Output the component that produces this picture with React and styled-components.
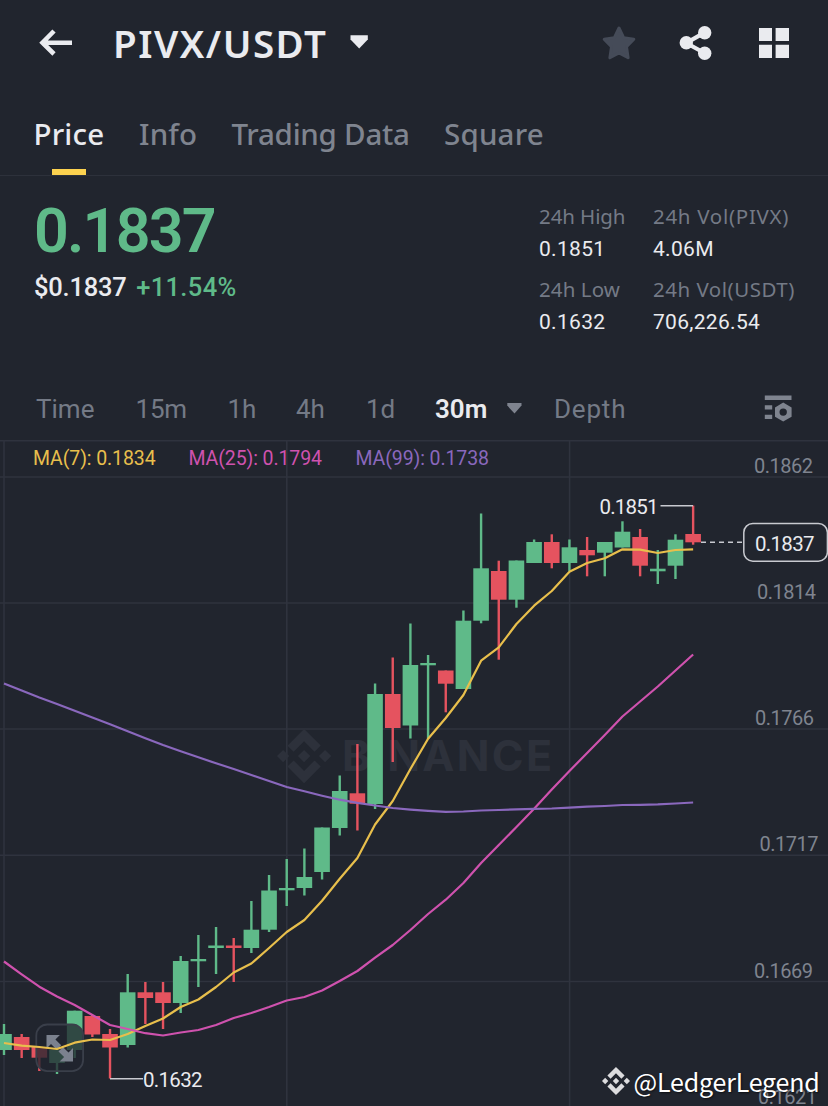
import React from "react";
import styled, { createGlobalStyle } from "styled-components";

const c = {
  bg: "#21252e",
  line: "#2d313b",
  text: "#eaebef",
  muted: "#7f848f",
  dim: "#747a86",
  green: "#5fba89",
  red: "#e5535f",
  yellow: "#e8bf4c",
  pink: "#cf52ae",
  purple: "#8a68bd",
};
const labelFont = `"Noto Sans", "Open Sans", sans-serif`;
const numberFont = `Roboto, "Liberation Sans", sans-serif`;

const GlobalStyle = createGlobalStyle`
  * { box-sizing: border-box; }
  body { margin: 0; background: ${c.bg}; }
`;

const Screen = styled.div`
  width: 828px;
  height: 1106px;
  overflow: hidden;
  display: flex;
  flex-direction: column;
  background: ${c.bg};
  color: ${c.text};
  font-family: ${labelFont};
  white-space: nowrap;
`;

const Header = styled.header`
  height: 85px;
  display: flex;
  align-items: center;
  padding: 0 38px;
`;
const Pair = styled.h1`
  margin: 0 0 0 39px;
  width: 237px;
  font-size: 38.5px;
  line-height: 52px;
  font-weight: 600;
  letter-spacing: 1.5px;
`;
const Actions = styled.div`
  margin-left: auto;
  display: flex;
  align-items: center;
  gap: 42px;
`;
const Icon = styled.svg`
  display: block;
  flex: none;
`;

const Tabs = styled.nav`
  height: 91px;
  display: flex;
  padding-left: 33.5px;
  border-bottom: 1.5px solid ${c.line};
`;
const Tab = styled.div`
  position: relative;
  width: ${(p) => p.$width}px;
  padding-top: 29px;
  font-size: 29.5px;
  line-height: 40px;
  font-weight: 500;
  letter-spacing: ${(p) => p.$spacing}px;
  color: ${(p) => (p.$active ? c.text : c.muted)};
`;
const Underline = styled.span`
  position: absolute;
  left: 18.5px;
  bottom: 0;
  width: 34px;
  height: 6px;
  background: #fcd24f;
`;

const Summary = styled.section`
  height: 201px;
  display: flex;
  justify-content: space-between;
  padding: 21px 28px 0 34px;
`;
const LastPrice = styled.div`
  font: 600 61px/68px ${numberFont};
  letter-spacing: -1.8px;
  color: ${c.green};
`;
const Change = styled.div`
  display: flex;
  gap: 9.5px;
  margin-top: 6px;
  font: 500 25.5px/32px ${numberFont};
  letter-spacing: -0.2px;
`;
const Percent = styled.span`
  letter-spacing: 0.35px;
  color: ${c.green};
`;
const Stats = styled.dl`
  margin: 4px 0 0;
  display: grid;
  grid-template-columns: 114px 147px;
  grid-auto-rows: 73px;
`;
const Stat = styled.div``;
const StatLabel = styled.dt`
  font-size: 20.5px;
  line-height: 30px;
  letter-spacing: ${(p) => p.$spacing || 0}px;
  color: ${c.dim};
`;
const StatValue = styled.dd`
  margin: 2px 0 0;
  font: 400 21px/32px ${numberFont};
  letter-spacing: 0.3px;
`;

const Intervals = styled.nav`
  height: 63px;
  display: flex;
  align-items: center;
  padding: 0 35px 0 36px;
  font: 400 26px/32px ${numberFont};
  color: ${c.dim};
`;
const Interval = styled.span`
  width: ${(p) => p.$width}px;
  padding-left: ${(p) => p.$inset || 0}px;
  letter-spacing: ${(p) => p.$spacing || 0}px;
  color: ${(p) => (p.$active ? c.text : "inherit")};
  font-weight: ${(p) => (p.$active ? 600 : 400)};
`;

const ChartArea = styled.section`
  position: relative;
  height: 666px;
`;
const ChartSvg = styled.svg`
  display: block;
  font-family: ${numberFont};
`;
const Legend = styled.div`
  position: absolute;
  left: 33px;
  top: 7px;
  display: flex;
  font: 400 19.5px/24px ${numberFont};
  letter-spacing: -0.1px;
`;
const LegendItem = styled.span`
  width: ${(p) => p.$width}px;
  color: ${(p) => p.$color};
`;
const Credit = styled.div`
  position: absolute;
  left: 602px;
  top: 623px;
  display: flex;
  align-items: center;
  gap: 3.5px;
  font: 400 25px/36px "Noto Sans CJK SC", "Noto Sans", sans-serif;
  letter-spacing: -0.2px;
  color: #fff;
  text-shadow: 1px 1px 2px rgba(0, 0, 0, 0.6);
`;

const BINANCE =
  "M16.624 13.9202l2.7175 2.7154-7.353 7.353-7.353-7.352 2.7175-2.7164 4.6355 4.6595 4.6356-4.6595zm4.6366-4.6366L24 12l-2.7154 2.7164L18.5682 12l2.6924-2.7164zm-9.272.001l2.7163 2.6914-2.7164 2.7174v-.001L9.2721 12l2.7164-2.7154zm-9.2722-.001L5.4088 12l-2.6914 2.6924L0 12l2.7164-2.7164zM11.9885.0115l7.353 7.329-2.7174 2.7154-4.6356-4.6356-4.6355 4.6595-2.7174-2.7154 7.353-7.353z";

// [direction, body top, body bottom, wick top, wick bottom]
const CANDLES = [
  ["g", 1034, 1050, 1024, 1055], ["r", 1037, 1050, 1034, 1058], ["r", 1047, 1057.7, 1047, 1071],
  ["g", 1050, 1063, 1050, 1074], ["g", 1010.7, 1050, 1010.7, 1058], ["r", 1016, 1034.5, 1015, 1037],
  ["r", 1034, 1047.5, 1029, 1078.5], ["g", 992.3, 1045, 974, 1047.5], ["r", 992.3, 998, 982, 1024],
  ["r", 992.3, 1003, 982, 1029], ["g", 961, 1003, 956, 1013], ["g", 959, 961.3, 935, 987],
  ["g", 945.5, 948, 927, 974], ["r", 945.5, 948, 938, 982], ["g", 929.7, 948, 901, 953],
  ["g", 890.5, 929.7, 875, 932], ["g", 888, 890.3, 859, 906], ["g", 877, 888, 848.5, 895.5],
  ["g", 827.5, 872, 827.5, 879.5], ["g", 791, 828, 775.5, 835.5], ["r", 793.3, 803.7, 744, 830.5],
  ["g", 694, 804, 683.5, 809], ["r", 694, 728, 657.5, 762], ["g", 665, 725.5, 623.5, 738.5],
  ["g", 663, 665.3, 655, 739], ["r", 670.5, 683.7, 670.5, 712.3], ["g", 620.7, 689, 610.5, 689],
  ["g", 568.3, 620.7, 513.5, 623.3], ["r", 571, 599.7, 560.7, 659.7], ["g", 560.5, 599.7, 560.5, 607.7],
  ["g", 542, 563, 539.5, 563], ["r", 542, 563, 534.3, 568.3], ["g", 547.3, 563, 539.5, 571],
  ["r", 550, 555.3, 537, 576.3], ["g", 542, 552.7, 542, 576.3], ["g", 531.7, 547.5, 521.3, 547.5],
  ["r", 537, 565.7, 529, 576.3], ["g", 568.7, 571.3, 550, 584], ["g", 539.7, 565.7, 534.3, 579],
  ["r", 534, 542.3, 505.5, 544.7],
];
const MA7 = [1043, 1045.6, 1047, 1049, 1042.7, 1039.5, 1040, 1034, 1026, 1018.5, 1007, 999.5, 987, 972.5, 963.5, 948, 932, 920, 900.7, 878.7, 858, 824.5, 801, 769, 738.7, 718, 695, 660.7, 647.3, 624, 605.7, 591, 571.7, 563, 558.3, 549.3, 549.7, 553, 550, 549.3];
const MA25 = [961.5, 974.3, 986.7, 996.5, 1005, 1015, 1025, 1029, 1033.2, 1035.5, 1032.5, 1030, 1025, 1018, 1013, 1007, 1000.5, 997, 990.5, 981, 971, 957.7, 945, 930, 914, 899.7, 883, 863, 845, 827, 808.7, 789.5, 771, 753, 735, 716.5, 701.5, 686.5, 670.5, 654.5];
const MA99 = [683.5, 690.5, 697.5, 704, 710.8, 717.5, 724.3, 731.3, 738.3, 745, 751.2, 757.3, 763.3, 769, 775, 781, 787, 791.3, 795.7, 799.7, 802.9, 805.5, 808, 809.6, 810.9, 811.9, 811.5, 810.5, 810, 809.3, 808.9, 808.5, 807.6, 806.7, 806, 805, 804.8, 804.4, 803.5, 802.5];
const x = (i) => 4 + i * 17.67;
const points = (values) => values.map((v, i) => `${x(i)},${v}`).join(" ");

const AXIS = [
  ["0.1862", 754, 473], ["0.1814", 757, 599], ["0.1766", 755, 725],
  ["0.1717", 759.5, 851], ["0.1669", 754, 977.5], ["0.1621", 758, 1103.5],
];

function Chart() {
  return (
    <ChartSvg width="828" height="666" viewBox="0 440 828 666">
      <g stroke="#2f333e" strokeWidth="1.6">
        {[440.8, 477, 603, 729, 855.3, 981.5].map((y) => <line key={y} x1="0" x2="828" y1={y} y2={y} />)}
        {[4, 286.8, 569.6].map((v) => <line key={v} x1={v} x2={v} y1="440" y2="1106" />)}
      </g>
      <g fill="#2d313b">
        <path d={BINANCE} transform="translate(277 729) scale(2.26)" />
        <text x="342" y="771" fontSize="43" fontWeight="700" fontFamily="Inter, sans-serif" textLength="210">BINANCE</text>
      </g>
      {CANDLES.map(([d, top, bottom, high, low], i) => (
        <g key={i} fill={d === "g" ? c.green : c.red}>
          <rect x={x(i) - 1.2} y={high} width="2.4" height={low - high} />
          <rect x={x(i) - 7.8} y={top} width="15.6" height={bottom - top} />
        </g>
      ))}
      <rect x="36.3" y="1024.5" width="46.8" height="46.6" rx="11" fill="rgba(33,37,46,0.76)" stroke="#3a3f4a" strokeWidth="1.8" />
      <g fill="#7b818e">
        <path d="M46.5 1035h13.4l-4.5 4.5 5.8 5.8-4.4 4.4-5.8-5.8-4.5 4.5z" />
        <path d="M73 1061.5h-13.4l4.5-4.5-5.6-5.6 4.4-4.4 5.6 5.6 4.5-4.5z" />
      </g>
      <g fill="none" strokeWidth="2.2" strokeLinejoin="round">
        <polyline points={points(MA7)} stroke={c.yellow} />
        <polyline points={points(MA25)} stroke={c.pink} />
        <polyline points={points(MA99)} stroke={c.purple} />
      </g>
      <g stroke="#c8cad0" strokeWidth="1.5" fill="none">
        <path d="M660.5 505.7H693M110 1078.7h33" />
        <path d="M701 542.3h43" strokeDasharray="5 4" />
      </g>
      <g fill={c.text} fontSize="20.5">
        <text x="599.5" y="513.8" textLength="59">0.1851</text>
        <text x="143" y="1087.3" textLength="59.5">0.1632</text>
      </g>
      <g fill={c.muted} fontSize="20">
        {AXIS.map(([t, tx, ty]) => <text key={t} x={tx} y={ty} textLength="59">{t}</text>)}
      </g>
      <rect x="743.8" y="523.5" width="83.6" height="37.7" rx="9" fill={c.bg} stroke="#c8cad0" strokeWidth="1.5" />
      <text x="755" y="550.8" fontSize="20.5" fill={c.text} textLength="59.5">0.1837</text>
    </ChartSvg>
  );
}

const STATS = [
  ["24h High", "0.1851", -0.1], ["24h Vol(PIVX)", "4.06M", 0.7],
  ["24h Low", "0.1632", 0.1], ["24h Vol(USDT)", "706,226.54", 0.5],
];

export default function App() {
  return (
    <Screen>
      <GlobalStyle />
      <Header>
        <Icon width="36" height="28" viewBox="38 28.5 36 28">
          <path d="M72 42.2H43M54 30.5L42.5 42.2L54 53.5" fill="none" stroke={c.text} strokeWidth="4.6" />
        </Icon>
        <Pair>PIVX/USDT</Pair>
        <Icon width="19" height="15" viewBox="350 35 19 15">
          <path d="M350.5 35.3h17.3v4.2l-8.6 9-8.7-9z" fill={c.text} />
        </Icon>
        <Actions>
          <Icon width="34" height="36" viewBox="602 25 34 36">
            <path d="M619 28l4.6 9.7 10.2 1.5-7.3 7.5 1.6 11-9.1-4.7-9.1 4.7 1.6-11-7.3-7.5 10.2-1.5z" fill="#454b58" stroke="#454b58" strokeWidth="3" strokeLinejoin="round" />
          </Icon>
          <Icon width="38" height="36" viewBox="678 25 38 36" fill={c.text}>
            <path d="M704.5 32.7L686.3 43l18.2 10" fill="none" stroke={c.text} strokeWidth="4.2" />
            <circle cx="704.7" cy="32.7" r="6.7" />
            <circle cx="686.3" cy="42.8" r="6.7" />
            <circle cx="704.7" cy="53.2" r="6.7" />
          </Icon>
          <Icon width="32" height="32" viewBox="758 27 32 32" fill={c.text}>
            <path d="M759 28h13v13h-13zM775.6 28h13.4v13h-13.4zM759 44.7h13v13.2h-13zM775.6 44.7h13.4v13.2h-13.4z" />
          </Icon>
        </Actions>
      </Header>
      <Tabs>
        <Tab $width={105.5} $active $spacing={0.2}>Price<Underline /></Tab>
        <Tab $width={92.5} $spacing={0.2}>Info</Tab>
        <Tab $width={212.5} $spacing={-0.25}>Trading Data</Tab>
        <Tab $width={110} $spacing={0.2}>Square</Tab>
      </Tabs>
      <Summary>
        <div>
          <LastPrice>0.1837</LastPrice>
          <Change><span>$0.1837</span><Percent>+11.54%</Percent></Change>
        </div>
        <Stats>
          {STATS.map(([label, value, spacing]) => (
            <Stat key={label}>
              <StatLabel $spacing={spacing}>{label}</StatLabel>
              <StatValue>{value}</StatValue>
            </Stat>
          ))}
        </Stats>
      </Summary>
      <Intervals>
        <Interval $width={99.5}>Time</Interval>
        <Interval $width={92} $spacing={-0.2}>15m</Interval>
        <Interval $width={68.5} $spacing={-0.2}>1h</Interval>
        <Interval $width={70}>4h</Interval>
        <Interval $width={69}>1d</Interval>
        <Interval $width={72} $active>30m</Interval>
        <Icon width="15" height="11" viewBox="507 402 15 11">
          <path d="M507.3 402h14.2v2.6l-7 8-7.2-8z" fill={c.muted} />
        </Icon>
        <Interval $width={242} $inset={32} $spacing={0.8}>Depth</Interval>
        <Icon width="28" height="28" viewBox="764 395 28 28" fill={c.muted}>
          <path d="M764.8 395.5h26.7v4.6h-26.7zM764.8 405.2h7.4v4.2h-7.4zM764.8 414.8h7.4v4.2h-7.4z" />
          <path fillRule="evenodd" d="M783.2 402.6l8.4 4.8v9.4l-8.4 4.8-8.2-4.8v-9.4zM783.2 408.4a3.7 3.7 0 1 0 0 7.4 3.7 3.7 0 0 0 0-7.4z" />
        </Icon>
      </Intervals>
      <ChartArea>
        <Chart />
        <Legend>
          <LegendItem $width={155.5} $color={c.yellow}>MA(7): 0.1834</LegendItem>
          <LegendItem $width={167} $color={c.pink}>MA(25): 0.1794</LegendItem>
          <LegendItem $width={140} $color={c.purple}>MA(99): 0.1738</LegendItem>
        </Legend>
        <Credit>
          <Icon width="28" height="28" viewBox="0 0 24 24"><path d={BINANCE} fill="#dcdcde" /></Icon>
          <span>@LedgerLegend</span>
        </Credit>
      </ChartArea>
    </Screen>
  );
}
